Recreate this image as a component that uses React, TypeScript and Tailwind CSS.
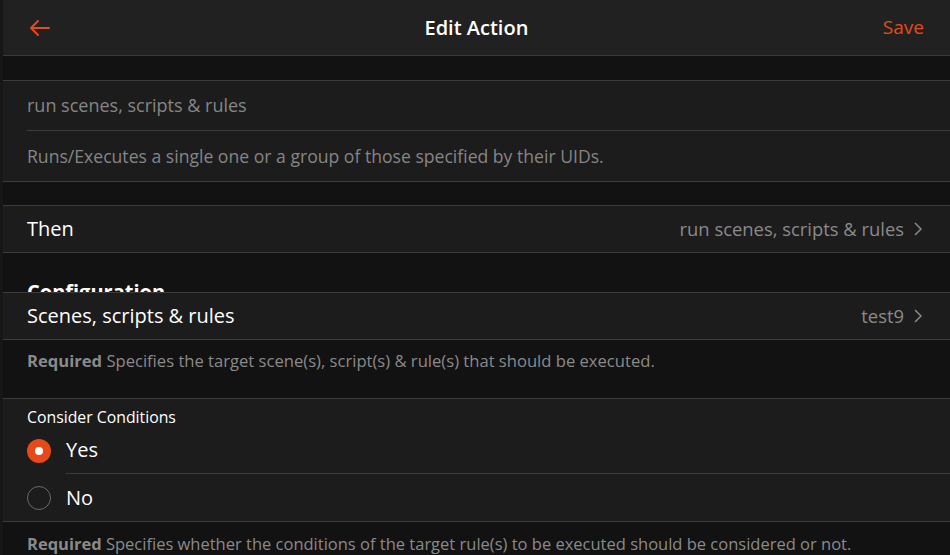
import React from 'react'

const FONT = "font-['Open_Sans','Noto_Sans',sans-serif]"

function Chevron() {
  return (
    <svg width="8" height="14" viewBox="0 0 8 14" className="ml-[10px]">
      <path d="M1 1l6 6-6 6" fill="none" stroke="#8a8a8a" strokeWidth="1.5" />
    </svg>
  )
}

function Radio({ checked }: { checked: boolean }) {
  return checked ? (
    <span className="flex h-[24px] w-[24px] items-center justify-center rounded-full bg-[#e64a19]">
      <span className="h-[8px] w-[8px] rounded-full bg-white" />
    </span>
  ) : (
    <span className="h-[24px] w-[24px] rounded-full border-[1.5px] border-[#6a6a6a]" />
  )
}

export default function App() {
  const [choice, setChoice] = React.useState('yes')

  return (
    <div className={`${FONT} flex h-[555px] w-[950px] overflow-hidden bg-[#121212]`}>
      <div className="w-[3px] shrink-0 bg-[#171717]" />
      <div className="flex min-w-0 flex-1 flex-col">
        {/* Navbar */}
        <div className="flex h-[56px] shrink-0 items-center justify-between border-b border-[#3a3a3a] bg-[#212121] pl-[25px] pr-[26px]">
          <svg width="24" height="24" viewBox="0 0 24 24" fill="none" stroke="#e64a19" strokeWidth="2" strokeLinecap="round" strokeLinejoin="round">
            <path d="M21 12H3M10 5l-7 7 7 7" />
          </svg>
          <h1 className="ml-[18px] text-[20px] font-semibold text-white">Edit Action</h1>
          <button className="text-[19px] text-[#e64a19]">Save</button>
        </div>

        {/* Action type */}
        <div className="mt-[24px] shrink-0 border-y border-[#3c3c3c] bg-[#1c1c1c]">
          <div className="ml-[24px] flex h-[50px] items-center border-b border-[#3c3c3c] text-[18px] text-[#858585]">
            run scenes, scripts &amp; rules
          </div>
          <div className="flex h-[50px] items-center px-[24px] text-[17.6px] text-[#858585]">
            Runs/Executes a single one or a group of those specified by their UIDs.
          </div>
        </div>

        {/* Then */}
        <div className="mt-[23px] flex h-[48px] shrink-0 items-center justify-between border-y border-[#3c3c3c] bg-[#1c1c1c] pl-[24px] pr-[28px]">
          <span className="text-[20px] text-white">Then</span>
          <span className="flex items-center text-[18.4px] text-[#8a8a8a]">
            run scenes, scripts &amp; rules
            <Chevron />
          </span>
        </div>

        {/* Configuration title, clipped by the card below */}
        <div className="h-[39px] shrink-0 overflow-hidden pl-[24px] pt-[26px] text-[20px] font-bold leading-[26px] text-white">
          Configuration
        </div>

        <div className="flex h-[48px] shrink-0 items-center justify-between border-y border-[#3c3c3c] bg-[#1c1c1c] pl-[24px] pr-[28px]">
          <span className="text-[20px] text-white">Scenes, scripts &amp; rules</span>
          <span className="flex items-center text-[18.4px] text-[#8a8a8a]">
            test9
            <Chevron />
          </span>
        </div>
        <div className="h-[58px] shrink-0 px-[24px] pt-[9px] text-[16.6px] text-[#8a8a8a]">
          <b className="font-bold">Required</b> Specifies the target scene(s), script(s) &amp; rule(s) that should be executed.
        </div>

        {/* Consider conditions */}
        <div className="shrink-0 border-y border-[#3c3c3c] bg-[#1c1c1c]">
          <div className="h-[28px] pl-[24px] pt-[8px] text-[15.8px] leading-[21px] text-white">Consider Conditions</div>
          {[
            { id: 'yes', label: 'Yes' },
            { id: 'no', label: 'No' },
          ].map((opt, i) => (
            <div key={opt.id} className="flex h-[47px] items-center" onClick={() => setChoice(opt.id)}>
              <div className="flex w-[63px] shrink-0 justify-start pl-[24px]">
                <Radio checked={choice === opt.id} />
              </div>
              <div className={`flex h-full flex-1 items-center text-[20px] text-white ${i === 0 ? 'border-b border-[#3c3c3c]' : ''}`}>
                {opt.label}
              </div>
            </div>
          ))}
        </div>
        <div className="shrink-0 px-[24px] pt-[10px] text-[16.5px] text-[#8a8a8a]">
          <b className="font-bold">Required</b> Specifies whether the conditions of the target rule(s) to be executed should be considered or not.
        </div>
      </div>
    </div>
  )
}
